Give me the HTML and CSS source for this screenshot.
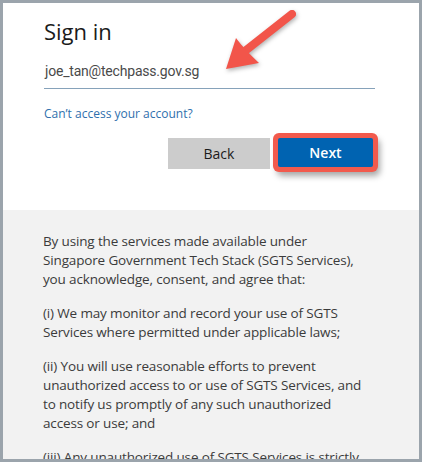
FILE: index.html
```html
<!DOCTYPE html>
<html lang="en">
<head>
  <meta charset="UTF-8" />
  <meta name="viewport" content="width=device-width, initial-scale=1.0"/>
  <title>Sign in</title>
  <link rel="stylesheet" href="styles.css">
</head>
<body>

<div class="frame">
  <section class="signin">
    <h1>Sign in</h1>
    <div class="field">joe_tan@techpass.gov.sg</div>
    <a class="help" href="#">Can’t access your account?</a>
    <div class="actions">
      <button class="btn back">Back</button>
      <button class="btn next">Next</button>
    </div>
  </section>

  <section class="notice">
    <p>By using the services made available under Singapore Government Tech Stack (SGTS Services), you acknowledge, consent, and agree that:</p>
    <p>(i) We may monitor and record your use of SGTS Services where permitted under applicable laws;</p>
    <p>(ii) You will use reasonable efforts to prevent unauthorized access to or use of SGTS Services, and to notify us promptly of any such unauthorized access or use; and</p>
    <p>(iii) Any unauthorized use of SGTS Services is strictly prohibited.</p>
  </section>

  <!-- annotation arrow pointing at the email field -->
  <svg class="arrow" width="90" height="75" viewBox="0 0 90 75">
    <line x1="77" y1="9" x2="30" y2="46" stroke="#f2554a" stroke-width="8" stroke-linecap="round"/>
    <path d="M11 64 L21 33 Q29 44 44 58 Z" fill="#f2554a"/>
  </svg>
</div>

</body>
</html>
```

FILE: styles.css
```css
html, body {
  margin: 0;
  height: 100%;
}

body {
  font-family: 'Open Sans', 'Noto Sans', sans-serif;
  background: #fff;
  color: #1b1b1b;
}

.frame {
  position: relative;
  box-sizing: border-box;
  height: 462px;
  border: 3px solid #9ba4ac;
  display: flex;
  flex-direction: column;
  overflow: hidden;
}

.signin {
  padding: 14px 44px 41px 41px;
  display: flex;
  flex-direction: column;
}

h1 {
  margin: 0;
  font-size: 22px;
  font-weight: 400;
  line-height: 28px;
  color: #1b1b1b;
}

.field {
  margin-top: 16px;
  padding: 0 0 7px 1px;
  font-family: Roboto, 'Liberation Sans', sans-serif;
  font-size: 14px;
  letter-spacing: -0.2px;
  line-height: 20px;
  color: #4a4a4a;
  border-bottom: 1px solid #86a2ba;
}

.help {
  margin-top: 16px;
  font-size: 12px;
  line-height: 18px;
  color: #2f70ad;
  text-decoration: none;
}

.actions {
  margin-top: 15px;
  display: flex;
  justify-content: flex-end;
  gap: 8px;
  padding-right: 2px;
}

.btn {
  border: none;
  font-family: inherit;
  font-size: 14px;
  cursor: pointer;
  padding: 0;
}

.back {
  width: 102px;
  height: 31px;
  background: #cccccc;
  color: #1b1b1b;
}

.next {
  width: 95px;
  height: 29px;
  background: #0063b1;
  color: #fff;
  font-weight: 600;
  border-radius: 2px;
  box-shadow: 0 0 0 5px #f25a4d, 3px 5px 6px 4px rgba(0, 0, 0, 0.35);
}

.notice {
  flex: 1;
  background: #f2f2f2;
  padding: 22px 48px 0 40px;
  font-size: 13.5px;
  letter-spacing: -0.15px;
  line-height: 19px;
  color: #3b3b3b;
}

.notice p {
  margin: 0 0 15px;
}

.arrow {
  position: absolute;
  left: 212px;
  top: 2px;
  filter: drop-shadow(1px 2px 2px rgba(0, 0, 0, 0.3));
}
```
